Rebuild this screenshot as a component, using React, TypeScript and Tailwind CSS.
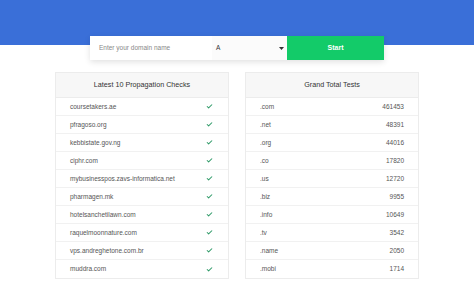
import { Check } from 'lucide-react';

const checks = [
  'coursetakers.ae',
  'pfragoso.org',
  'kebbistate.gov.ng',
  'ciphr.com',
  'mybusinesspos.zavs-informatica.net',
  'pharmagen.mk',
  'hotelsanchetilawn.com',
  'raquelmoonnature.com',
  'vps.andreghetone.com.br',
  'muddra.com',
];

const totals: [string, string][] = [
  ['.com', '461453'],
  ['.net', '48391'],
  ['.org', '44016'],
  ['.co', '17820'],
  ['.us', '12720'],
  ['.biz', '9955'],
  ['.info', '10649'],
  ['.tv', '3542'],
  ['.name', '2050'],
  ['.mobi', '1714'],
];

function Card({ title, children }: { title: string; children: React.ReactNode }) {
  return (
    <div className="w-[174px] border border-[#ececec] bg-white">
      <div className="h-[25px] flex items-center justify-center bg-[#f7f7f7] border-b border-[#ececec] text-[7.2px] text-[#333]">
        {title}
      </div>
      {children}
    </div>
  );
}

export default function App() {
  return (
    <div className="w-[474px] h-[303px] bg-white font-['Liberation_Sans',Arial,sans-serif] overflow-hidden">
      <div className="h-[45px] bg-[#3a6fd8]" />

      <div className="-mt-[9px] mx-auto w-[294px] h-[24px] flex bg-white shadow-[0_2px_6px_rgba(0,0,0,0.12)]">
        <div className="w-[122px] flex items-center pl-[9px] text-[6.5px] text-[#888]">
          Enter your domain name
        </div>
        <div className="w-[75px] flex items-center justify-between pl-[4px] pr-[3px] bg-[#fbfbfb] text-[6.5px] text-[#333]">
          <span>A</span>
          <svg width="5" height="3" viewBox="0 0 5 3">
            <path d="M0 0h5L2.5 3z" fill="#333" />
          </svg>
        </div>
        <div className="flex-1 flex items-center justify-center bg-[#13cb69] text-white text-[7px] font-bold">
          Start
        </div>
      </div>

      <div className="mt-[12px] flex justify-center gap-[16px]">
        <Card title="Latest 10 Propagation Checks">
          {checks.map((d, i) => (
            <div
              key={d}
              className={`h-[18px] flex items-center justify-between pl-[14px] pr-[15px] text-[6.5px] text-[#555] ${i < checks.length - 1 ? 'border-b border-[#f1f1f1]' : ''}`}
            >
              <span>{d}</span>
              <Check size={7} strokeWidth={3.5} className="text-[#2f9a68]" />
            </div>
          ))}
        </Card>
        <Card title="Grand Total Tests">
          {totals.map(([tld, n], i) => (
            <div
              key={tld}
              className={`h-[18px] flex items-center justify-between pl-[14px] pr-[14px] text-[6.5px] text-[#555] ${i < totals.length - 1 ? 'border-b border-[#f1f1f1]' : ''}`}
            >
              <span>{tld}</span>
              <span>{n}</span>
            </div>
          ))}
        </Card>
      </div>
    </div>
  );
}
